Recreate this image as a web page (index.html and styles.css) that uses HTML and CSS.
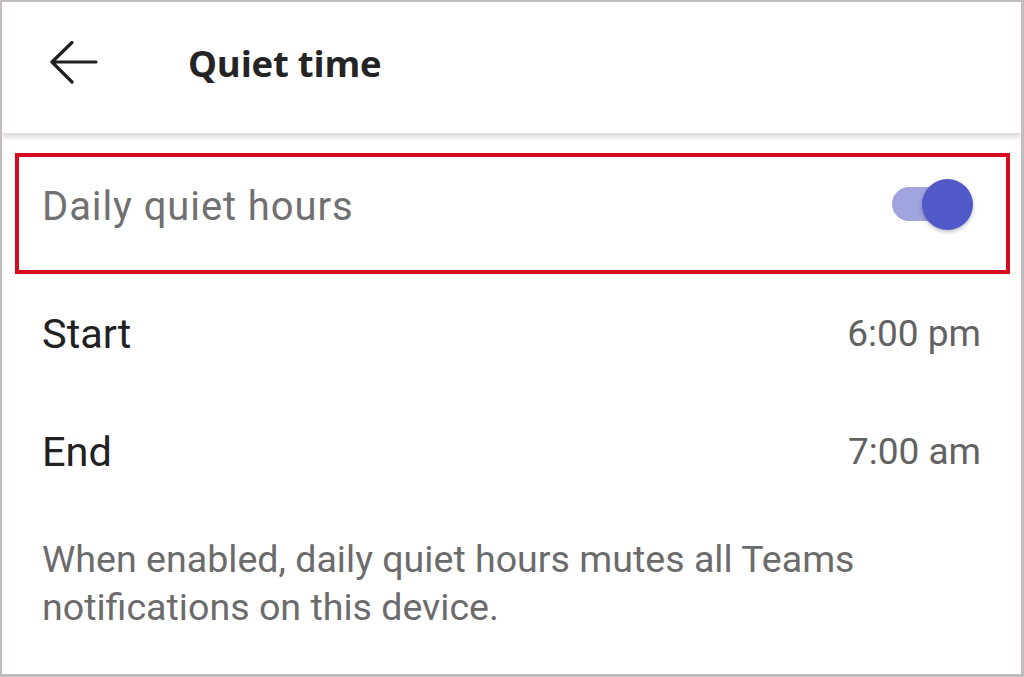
FILE: index.html
```html
<!DOCTYPE html>
<html>
<head>
<meta charset="utf-8">
<link rel="stylesheet" href="styles.css">
</head>
<body>
<div class="frame">
  <header class="header">
    <svg class="back" width="50" height="44" viewBox="0 0 50 44" aria-hidden="true">
      <path d="M47 21H3M23 1.5L3 21L23 41" fill="none" stroke="#1f1f1f" stroke-width="3.2" stroke-linecap="round" stroke-linejoin="round"/>
    </svg>
    <h1 class="title">Quiet time</h1>
  </header>
  <main class="content">
    <div class="row row-toggle">
      <span class="toggle-label">Daily quiet hours</span>
      <span class="switch"><span class="track"></span><span class="thumb"></span></span>
    </div>
    <div class="row row-time">
      <span class="label">Start</span>
      <span class="value">6:00 pm</span>
    </div>
    <div class="row row-time">
      <span class="label">End</span>
      <span class="value">7:00 am</span>
    </div>
    <p class="note">When enabled, daily quiet hours mutes all Teams notifications on this device.</p>
  </main>
</div>
</body>
</html>
```
FILE: styles.css
```css
html, body {
  margin: 0;
  padding: 0;
  background: #ffffff;
}
.frame {
  box-sizing: border-box;
  width: 1024px;
  height: 677px;
  border-style: solid;
  border-color: #c2bcbc;
  border-width: 2px 3px 3px 2px;
  background: #ffffff;
  font-family: Roboto, "Liberation Sans", sans-serif;
  overflow: hidden;
}
.header {
  height: 131px;
  display: flex;
  align-items: center;
  padding-left: 47px;
  box-shadow: 0 3px 5px rgba(0, 0, 0, 0.16);
  border-bottom: 1px solid #e0e0e0;
  position: relative;
}
.back {
  display: block;
  margin-top: -9px;
}
.title {
  margin: -10px 0 0 89px;
  font-family: "Open Sans", "Noto Sans", sans-serif;
  font-weight: 700;
  font-size: 36.5px;
  color: #242424;
  letter-spacing: -0.2px;
}
.content {
  padding-top: 19px;
}
.row {
  display: flex;
  align-items: center;
  justify-content: space-between;
}
.row-toggle {
  box-sizing: border-box;
  height: 121px;
  margin: 0 11px 0 13px;
  border: 4px solid #d70a1e;
  padding: 0 30px 0 23px;
}
.toggle-label {
  font-size: 40px;
  letter-spacing: 0.9px;
  color: #707070;
  margin-top: -14px;
}
.switch {
  position: relative;
  width: 84px;
  height: 52px;
  margin-top: -18px;
}
.track {
  position: absolute;
  left: 0;
  top: 8px;
  width: 62px;
  height: 34px;
  border-radius: 17px;
  background: #a1a4df;
}
.thumb {
  position: absolute;
  right: 3px;
  top: 0;
  width: 51px;
  height: 51px;
  border-radius: 50%;
  background: #5158c8;
  box-shadow: 0 2px 4px rgba(0, 0, 0, 0.25);
}
.row-time {
  height: 118px;
  padding: 0 40px 0 40px;
}
.label {
  font-size: 41.5px;
  color: #212121;
}
.value {
  font-size: 37px;
  color: #626262;
}
.note {
  margin: 25px 0 0 40px;
  width: 880px;
  font-size: 37.6px;
  line-height: 48px;
  color: #6b6b6b;
}
```
